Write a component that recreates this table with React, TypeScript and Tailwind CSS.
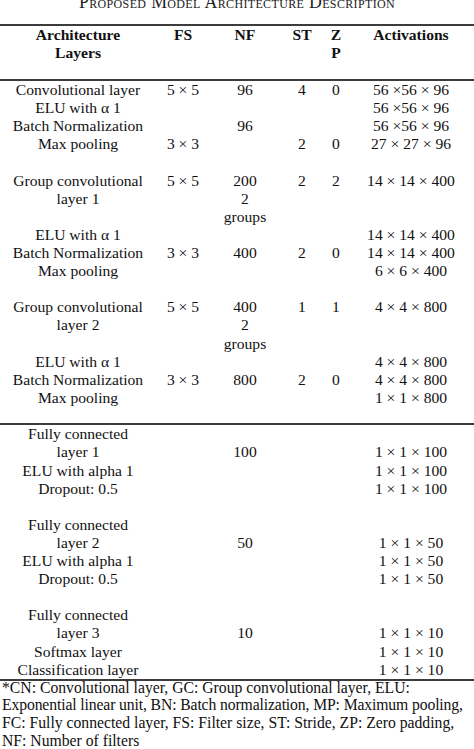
import React from "react";

type Row = string[] | "blank" | "line";

const rows: Row[] = [
  ["Convolutional layer", "5 × 5", "96", "4", "0", "56 ×56 × 96"],
  ["ELU with α 1", "", "", "", "", "56 ×56 × 96"],
  ["Batch Normalization", "", "96", "", "", "56 ×56 × 96"],
  ["Max pooling", "3 × 3", "", "2", "0", "27 × 27 × 96"],
  "blank",
  ["Group convolutional", "5 × 5", "200", "2", "2", "14 × 14 × 400"],
  ["layer 1", "", "2", "", "", ""],
  ["", "", "groups", "", "", ""],
  ["ELU with α 1", "", "", "", "", "14 × 14 × 400"],
  ["Batch Normalization", "3 × 3", "400", "2", "0", "14 × 14 × 400"],
  ["Max pooling", "", "", "", "", "6 × 6 × 400"],
  "blank",
  ["Group convolutional", "5 × 5", "400", "1", "1", "4 × 4 × 800"],
  ["layer 2", "", "2", "", "", ""],
  ["", "", "groups", "", "", ""],
  ["ELU with α 1", "", "", "", "", "4 × 4 × 800"],
  ["Batch Normalization", "3 × 3", "800", "2", "0", "4 × 4 × 800"],
  ["Max pooling", "", "", "", "", "1 × 1 × 800"],
  "line",
  ["Fully connected", "", "", "", "", ""],
  ["layer 1", "", "100", "", "", "1 × 1 × 100"],
  ["ELU with alpha 1", "", "", "", "", "1 × 1 × 100"],
  ["Dropout: 0.5", "", "", "", "", "1 × 1 × 100"],
  "blank",
  ["Fully connected", "", "", "", "", ""],
  ["layer 2", "", "50", "", "", "1 × 1 × 50"],
  ["ELU with alpha 1", "", "", "", "", "1 × 1 × 50"],
  ["Dropout: 0.5", "", "", "", "", "1 × 1 × 50"],
  "blank",
  ["Fully connected", "", "", "", "", ""],
  ["layer 3", "", "10", "", "", "1 × 1 × 10"],
  ["Softmax layer", "", "", "", "", "1 × 1 × 10"],
  ["Classification layer", "", "", "", "", "1 × 1 × 10"],
];

const cols = "grid grid-cols-[156px_54px_70px_44px_24px_126px]";

function Rule() {
  return <div className="h-[2px] w-full bg-[#3c3c3c]" />;
}

export default function App() {
  return (
    <div
      className="w-[474px] h-[749px] overflow-hidden bg-white text-[#111] text-[15.6px] leading-[18.1px]"
      style={{ fontFamily: '"Liberation Serif", "Times New Roman", serif' }}
    >
      <div className="-mt-[7.5px] mb-[13.5px] h-[18px] text-center text-[17.8px] leading-[18px] tracking-[0.35px] text-[#222] [font-variant:small-caps] whitespace-nowrap">
        Proposed Model Architecture Description
      </div>
      <Rule />
      <div className={`${cols} pt-0 pb-[17px] font-bold text-center`}>
        <div>
          Architecture
          <br />
          Layers
        </div>
        <div>FS</div>
        <div>NF</div>
        <div>ST</div>
        <div>
          Z
          <br />P
        </div>
        <div>Activations</div>
      </div>
      <Rule />
      <div>
        {rows.map((r, i) => {
          if (r === "blank") return <div key={i} className="h-[18.1px]" />;
          if (r === "line")
            return (
              <div key={i} className="pt-[16.5px] pb-0">
                <Rule />
              </div>
            );
          return (
            <div key={i} className={`${cols} h-[18.1px] text-center whitespace-nowrap`}>
              {r.map((c, j) => (
                <div key={j}>{c}</div>
              ))}
            </div>
          );
        })}
      </div>
      <Rule />
      <div className="-mt-[2px] pl-[2px] text-[15.7px] leading-[17.7px] whitespace-nowrap">
        *CN: Convolutional layer, GC: Group convolutional layer, ELU:
        <br />
        <span className="tracking-[-0.12px]">
          Exponential linear unit, BN: Batch normalization, MP: Maximum pooling,
        </span>
        <br />
        FC: Fully connected layer, FS: Filter size, ST: Stride, ZP: Zero padding,
        <br />
        NF: Number of filters
      </div>
    </div>
  );
}
